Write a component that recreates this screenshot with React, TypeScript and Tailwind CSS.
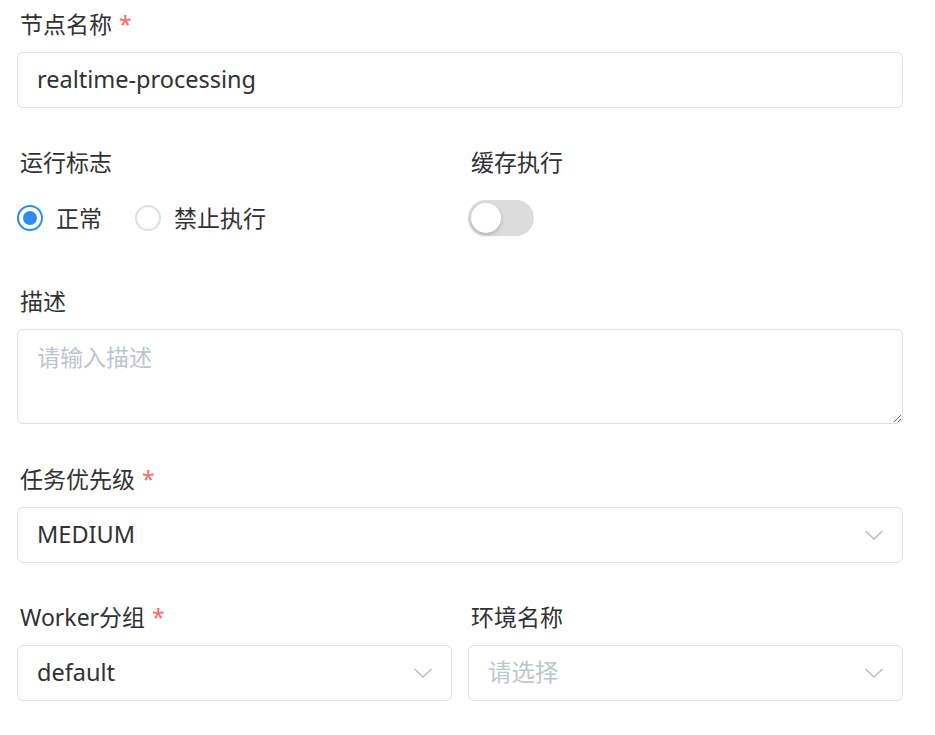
import React from "react";

const font = { fontFamily: '"Noto Sans", "Noto Sans CJK SC", sans-serif' };

function Label({ text, required }: { text: string; required?: boolean }) {
  return (
    <div className="h-[32px] mb-[12px] flex items-center pl-[3px] text-[23px] text-[#303133] leading-[32px]">
      <span>{text}</span>
      {required && <span className="ml-[7px] text-[#f56c6c]">*</span>}
    </div>
  );
}

function Chevron() {
  return (
    <svg width="20" height="12" viewBox="0 0 20 12" className="shrink-0">
      <path d="M1.5 2 L10 10 L18.5 2" fill="none" stroke="#b8bcc4" strokeWidth="1.4" />
    </svg>
  );
}

function Select({ value, placeholder }: { value?: string; placeholder?: string }) {
  return (
    <div className="h-[56px] border border-[#dcdfe6] rounded-[6px] flex items-center pl-[19px] pr-[18px] bg-white">
      <span className={"flex-1 text-[23.5px] " + (value ? "text-[#303133]" : "text-[#c0c4cc]")}>
        {value ?? placeholder}
      </span>
      <Chevron />
    </div>
  );
}

export default function App() {
  return (
    <div className="w-[935px] h-[735px] bg-white pl-[17px] pr-[32px] pt-[8px]" style={font}>
      {/* 节点名称 */}
      <div className="mb-[38px]">
        <Label text="节点名称" required />
        <div className="h-[56px] border border-[#dcdfe6] rounded-[6px] flex items-center pl-[19px] text-[23.5px] text-[#303133]">
          realtime-processing
        </div>
      </div>

      {/* row 2 */}
      <div className="grid grid-cols-2 gap-x-[16px] mb-[39px]">
        <div>
          <Label text="运行标志" />
          <div className="h-[56px] flex items-center">
            <div className="flex items-center">
              <span className="w-[26px] h-[26px] rounded-full border-2 border-[#2d8cf0] flex items-center justify-center">
                <span className="w-[14px] h-[14px] rounded-full bg-[#2d8cf0]" />
              </span>
              <span className="ml-[13px] text-[23px] text-[#303133]">正常</span>
            </div>
            <div className="flex items-center ml-[33px]">
              <span className="w-[26px] h-[26px] rounded-full border-2 border-[#dcdfe6]" />
              <span className="ml-[13px] text-[23px] text-[#303133]">禁止执行</span>
            </div>
          </div>
        </div>
        <div>
          <Label text="缓存执行" />
          <div className="h-[56px] flex items-center">
            <div className="w-[66px] h-[36px] rounded-full bg-[#dcdcdc] flex items-center px-[3px]">
              <span className="w-[30px] h-[30px] rounded-full bg-white shadow-[0_2px_4px_rgba(0,0,0,0.2)]" />
            </div>
          </div>
        </div>
      </div>

      {/* 描述 */}
      <div className="mb-[39px]">
        <Label text="描述" />
        <textarea
          placeholder="请输入描述"
          className="block w-full h-[95px] border border-[#dcdfe6] rounded-[6px] px-[19px] py-[11px] text-[23px] leading-[32px] text-[#303133] placeholder:text-[#c0c4cc] outline-none resize-y"
          style={font}
        />
      </div>

      {/* 任务优先级 */}
      <div className="mb-[38px]">
        <Label text="任务优先级" required />
        <Select value="MEDIUM" />
      </div>

      {/* Worker分组 / 环境名称 */}
      <div className="grid grid-cols-2 gap-x-[16px]">
        <div>
          <Label text="Worker分组" required />
          <Select value="default" />
        </div>
        <div>
          <Label text="环境名称" />
          <Select placeholder="请选择" />
        </div>
      </div>
    </div>
  );
}
